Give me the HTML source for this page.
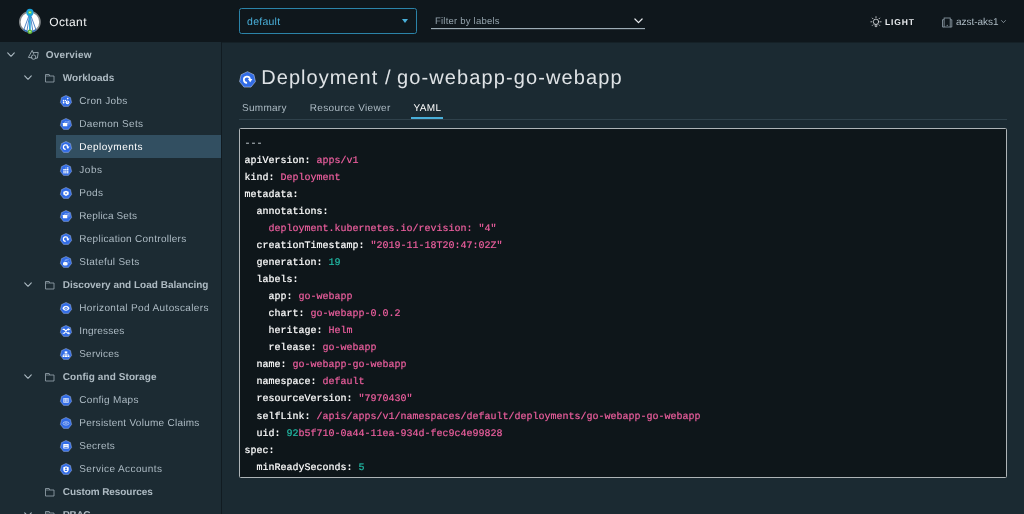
<!DOCTYPE html>
<html lang="en"><head><meta charset="utf-8"><title>Octant</title>
<style>
html,body{margin:0;padding:0}
body{width:1024px;height:514px;overflow:hidden;background:#1b2a32;font-family:"Liberation Sans",sans-serif;color:#adbbc4;position:relative;-webkit-font-smoothing:antialiased;text-rendering:geometricPrecision}
.hdr,.side,.main{will-change:transform}
.main{position:absolute;left:0;top:0;width:1024px;height:514px}
.hdr{position:absolute;left:0;top:0;width:1024px;height:42px;background:#0f171c;border-bottom:1px solid #152127}
.side{position:absolute;left:0;top:42px;width:221px;height:472px;background:#1c2b33;border-right:1px solid #111b21;overflow:hidden}
.side .sel{position:absolute;left:56px;width:165px;height:23px;background:#324f61}
.ic,.ki{position:absolute;overflow:visible}
.st{position:absolute;height:23px;line-height:23px;font-size:10px;white-space:nowrap;color:#adbbc4}
.st.b{font-weight:bold;color:#aebbc3}
.st.on{color:#fff}
.abs{position:absolute;white-space:nowrap}
.brand{left:49.250px;top:10.500px;height:22px;line-height:22px;font-size:12px;color:#f2f4f5}
.ns{position:absolute;left:239px;top:8px;width:176px;height:23.600px;border:1px solid #2b83a8;border-radius:2.500px;background:#0f171c}
.ns span{position:absolute;left:7.100px;top:2.300px;line-height:23px;font-size:10.500px;color:#49afd9}
.ns i{position:absolute;left:162.400px;top:10.300px;border-left:3.600px solid transparent;border-right:3.600px solid transparent;border-top:4.200px solid #49afd9}
.flt{position:absolute;left:431px;top:10px;width:214px;height:18px;border-bottom:1px solid #9dacb5;box-shadow:0 1px 0 rgba(157,172,181,.18)}
.flt span{position:absolute;left:4px;top:1px;line-height:21px;font-size:9.500px;color:#93a2ab}
.light{left:885px;top:11px;line-height:22px;font-size:8.500px;font-weight:bold;color:#e9ecef}
.ctx{left:956px;top:11.750px;line-height:22px;font-size:10px;color:#adbbc4}
h1{position:absolute;margin:0;left:261.300px;top:63.600px;line-height:28px;font-size:20px;font-weight:normal;color:#dfe3e6;white-space:nowrap}
.tab{position:absolute;top:99.200px;line-height:20px;font-size:10px;color:#acbac3;white-space:nowrap}
.tab.on{color:#fff}
.tabline{position:absolute;left:239px;top:119px;width:768px;height:1px;background:#2f414b}
.tabsel{position:absolute;left:411px;top:116.500px;width:32px;height:2px;background:#49afd9}
pre{position:absolute;left:239px;top:128px;width:761px;height:341.250px;margin:0;padding:6.750px 0 0 4.500px;-webkit-text-stroke:.2px;border:1px solid #aeb4b7;border-radius:1.500px;background:#0e161a;font-family:"Liberation Mono",monospace;font-size:10px;line-height:17.050px;color:#fff;overflow:hidden}
pre .k{color:#fff} pre .s{color:#ee5f9f} pre .n{color:#22bba6} pre .c{color:#b4bcc0}
</style></head>
<body>
<div class="hdr">
 <svg class="ic" style="left:18px;top:8px;width:24px;height:28px" viewBox="0 0 24 28">
  <circle cx="11.900" cy="13.900" r="10.100" fill="#fff" stroke="#85898c" stroke-width="1.600"/>
  <path d="M5.800 21.800q6.100 4.600 12.200 0" fill="none" stroke="#2a6fc0" stroke-width="1.300"/>
  <path d="M11.900 5l-6.100 16.800M11.900 5l6.100 16.800M11.900 5l-3 18.300M11.900 5l3 18.300" fill="none" stroke="#1b5fb4" stroke-width=".75"/>
  <path d="M11.900 5v18" stroke="#19a3dc" stroke-width="1.600"/>
  <circle cx="11.900" cy="4.400" r="3.600" fill="#19a3dc"/><circle cx="11.900" cy="4.400" r="1.700" fill="#6fcf4a"/><circle cx="11.900" cy="4.400" r=".7" fill="#dff5d2"/>
  <circle cx="11.900" cy="23.750" r="2.300" fill="#62bb3a"/><circle cx="11.900" cy="23.750" r=".8" fill="#dff5d2"/>
 </svg>
 <div class="abs brand" style="letter-spacing:0.378px">Octant</div>
 <div class="ns"><span class="t" style="letter-spacing:0.245px">default</span><i></i></div>
 <div class="flt"><span class="t" style="letter-spacing:0.217px">Filter by labels</span>
  <svg class="ic" style="left:203px;top:8.300px;width:9px;height:5.800px" viewBox="0 0 9 5.800"><path d="M.9 1l3.600 3.700 3.600-3.700" fill="none" stroke="#e9ecef" stroke-width="1.200" stroke-linecap="round" stroke-linejoin="round"/></svg></div>
 <svg class="ic" style="left:870px;top:15.500px;width:12px;height:12px" viewBox="0 0 12 12"><g fill="none" stroke="#dfe3e6" stroke-width=".8" stroke-linecap="round"><circle cx="6" cy="5.800" r="2.700"/><path d="M6 .7v.9M.9 5.800h.9M10.200 5.800h.9M2.300 2.100l.7 .7M9.700 2.100l-.7 .7M2.300 9.500l.7-.7M9.700 9.500l-.7-.7"/><path d="M5.200 8.700v1.900h1.600v-1.900" stroke-width=".75"/></g></svg>
 <div class="abs light" style="letter-spacing:0.875px">LIGHT</div>
 <svg class="ic" style="left:942px;top:16.500px;width:11px;height:11px" viewBox="0 0 11 11"><g fill="none" stroke="#8c9ba5" stroke-width=".85"><rect x="2.100" y="1" width="6.100" height="9"/><path d="M2.100 2.700h-1.600v7.300h1.600M8.200 2.700h1.600v7.300h-1.600"/></g><circle cx="5.200" cy="8.400" r=".55" fill="#8c9ba5"/></svg>
 <div class="abs ctx" style="letter-spacing:-0.037px">azst-aks1</div>
 <svg class="ic" style="left:1000.700px;top:20.300px;width:5px;height:3.400px" viewBox="0 0 6 4"><path d="M.6 .6l2.400 2.500 2.400-2.500" fill="none" stroke="#adbbc4" stroke-width=".8" stroke-linecap="round" stroke-linejoin="round"/></svg>
</div>
<div class="side">
<svg class="ic" style="left:7.0px;top:10.1px;width:8px;height:5.400px" viewBox="0 0 8 5.400"><path d="M.7 .9l3.300 3.400 3.300-3.400" fill="none" stroke="#adbbc4" stroke-width="1.100" stroke-linecap="round" stroke-linejoin="round"/></svg>
<svg class="ic" style="left:28px;top:7.5px;width:11px;height:10px" viewBox="0 0 11 10"><g fill="none" stroke="#adbbc4" stroke-width=".8" stroke-linejoin="round"><path d="M4.200 .4l1.400 3.400M4.200 .4l-3.800 7 4 .5"/><path d="M5 2.700l5.200-.3-.8 5.700-2.200 .3"/><circle cx="5.600" cy="7.100" r="2.200"/></g></svg>
<div class="st b" style="left:45.75px;top:1.8px;letter-spacing:0.181px">Overview</div>
<svg class="ic" style="left:24.2px;top:33.1px;width:8px;height:5.400px" viewBox="0 0 8 5.400"><path d="M.7 .9l3.300 3.400 3.300-3.400" fill="none" stroke="#adbbc4" stroke-width="1.100" stroke-linecap="round" stroke-linejoin="round"/></svg>
<svg class="ic" style="left:44.7px;top:32.0px;width:9.500px;height:8.500px" viewBox="0 0 9.500 8.500"><path d="M.5 8v-7.500h3.700l.5 1.500h4.300v6z" fill="none" stroke="#93a2ab" stroke-width=".85" stroke-linejoin="round"/><path d="M.5 2h4.200" stroke="#93a2ab" stroke-width=".7"/></svg>
<div class="st b" style="left:62.75px;top:24.8px;letter-spacing:0.07px">Workloads</div>
<svg class="ki" style="left:60.2px;top:52.949999999999996px;width:12px;height:12px" viewBox="0 0 12 12"><polygon points="6.00,0.45 10.50,2.61 11.61,7.48 8.49,11.38 3.51,11.38 0.39,7.48 1.50,2.61" fill="#326ce5" stroke="#dfe8fb" stroke-opacity=".75" stroke-width=".45" stroke-linejoin="round"/><g fill="#fff"><circle cx="3.600" cy="5.700" r=".85"/><circle cx="3.600" cy="7.700" r=".85"/><circle cx="5.500" cy="5.500" r=".65"/><circle cx="7.700" cy="3.600" r=".8"/><circle cx="7.500" cy="7.300" r="1.850"/><path d="M7.500 6.200v1.200h.9" stroke="#326ce5" stroke-width=".55" fill="none"/></g></svg>
<div class="st" style="left:79.25px;top:47.8px;letter-spacing:0.303px">Cron Jobs</div>
<svg class="ki" style="left:60.2px;top:75.95px;width:12px;height:12px" viewBox="0 0 12 12"><polygon points="6.00,0.45 10.50,2.61 11.61,7.48 8.49,11.38 3.51,11.38 0.39,7.48 1.50,2.61" fill="#326ce5" stroke="#dfe8fb" stroke-opacity=".75" stroke-width=".45" stroke-linejoin="round"/><g fill="#fff"><rect x="2.900" y="5.100" width="4.400" height="3.100" rx=".2"/><path d="M4.200 4.300h4.100v2.900M5.400 3.500h4v2.900" fill="none" stroke="#fff" stroke-width=".55" stroke-dasharray=".8 .5" opacity=".8"/></g></svg>
<div class="st" style="left:79.25px;top:70.8px;letter-spacing:0.316px">Daemon Sets</div>
<div class="sel" style="top:93px"></div>
<svg class="ki" style="left:60.2px;top:98.95px;width:12px;height:12px" viewBox="0 0 12 12"><polygon points="6.00,0.45 10.50,2.61 11.61,7.48 8.49,11.38 3.51,11.38 0.39,7.48 1.50,2.61" fill="#326ce5" stroke="#dfe8fb" stroke-opacity=".75" stroke-width=".45" stroke-linejoin="round"/><g fill="#fff"><path d="M5.700 8.350a2.200 2.200 0 1 1 2.100-2.500" fill="none" stroke="#fff" stroke-width="1.200"/><path d="M6.300 5.600h3.200l-1.600 2.300z"/></g></svg>
<div class="st on" style="left:79.25px;top:93.8px;letter-spacing:0.489px">Deployments</div>
<svg class="ki" style="left:60.2px;top:121.95px;width:12px;height:12px" viewBox="0 0 12 12"><polygon points="6.00,0.45 10.50,2.61 11.61,7.48 8.49,11.38 3.51,11.38 0.39,7.48 1.50,2.61" fill="#326ce5" stroke="#dfe8fb" stroke-opacity=".75" stroke-width=".45" stroke-linejoin="round"/><g fill="#fff"><g><rect x="3.300" y="5" width="1.450" height="1.200"/><rect x="5.150" y="5" width="1.450" height="1.200"/><rect x="7" y="5" width="1.450" height="1.200"/><rect x="3.300" y="6.600" width="1.450" height="1.200"/><rect x="5.150" y="6.600" width="1.450" height="1.200"/><rect x="7" y="6.600" width="1.450" height="1.200"/><rect x="3.300" y="8.200" width="1.450" height="1.200"/><rect x="5.150" y="8.200" width="1.450" height="1.200"/><rect x="7" y="8.200" width="1.450" height="1.200"/><rect x="7" y="3.400" width="1.450" height="1.200"/><rect x="5.150" y="3.400" width="1.450" height="1.200" opacity=".35"/></g></g></svg>
<div class="st" style="left:79.25px;top:116.8px;letter-spacing:0.542px">Jobs</div>
<svg class="ki" style="left:60.2px;top:144.95000000000002px;width:12px;height:12px" viewBox="0 0 12 12"><polygon points="6.00,0.45 10.50,2.61 11.61,7.48 8.49,11.38 3.51,11.38 0.39,7.48 1.50,2.61" fill="#326ce5" stroke="#dfe8fb" stroke-opacity=".75" stroke-width=".45" stroke-linejoin="round"/><g fill="#fff"><path d="M6 3.700l2.700 1v2.900l-2.700 1.400-2.700-1.400v-2.900z"/><circle cx="6" cy="6.300" r="1" fill="#326ce5" opacity=".75"/></g></svg>
<div class="st" style="left:79.25px;top:139.8px;letter-spacing:0.318px">Pods</div>
<svg class="ki" style="left:60.2px;top:167.95000000000002px;width:12px;height:12px" viewBox="0 0 12 12"><polygon points="6.00,0.45 10.50,2.61 11.61,7.48 8.49,11.38 3.51,11.38 0.39,7.48 1.50,2.61" fill="#326ce5" stroke="#dfe8fb" stroke-opacity=".75" stroke-width=".45" stroke-linejoin="round"/><g fill="#fff"><rect x="2.900" y="5.100" width="4.400" height="3.100" rx=".2"/><path d="M4.200 4.300h4.100v2.900M5.400 3.500h4v2.900" fill="none" stroke="#fff" stroke-width=".55" stroke-dasharray=".8 .5" opacity=".8"/></g></svg>
<div class="st" style="left:79.25px;top:162.8px;letter-spacing:0.146px">Replica Sets</div>
<svg class="ki" style="left:60.2px;top:190.95000000000002px;width:12px;height:12px" viewBox="0 0 12 12"><polygon points="6.00,0.45 10.50,2.61 11.61,7.48 8.49,11.38 3.51,11.38 0.39,7.48 1.50,2.61" fill="#326ce5" stroke="#dfe8fb" stroke-opacity=".75" stroke-width=".45" stroke-linejoin="round"/><g fill="#fff"><path d="M5.700 8.350a2.200 2.200 0 1 1 2.100-2.500" fill="none" stroke="#fff" stroke-width="1.200"/><path d="M6.300 5.600h3.200l-1.600 2.300z"/></g></svg>
<div class="st" style="left:79.25px;top:185.8px;letter-spacing:0.29px">Replication Controllers</div>
<svg class="ki" style="left:60.2px;top:213.95000000000002px;width:12px;height:12px" viewBox="0 0 12 12"><polygon points="6.00,0.45 10.50,2.61 11.61,7.48 8.49,11.38 3.51,11.38 0.39,7.48 1.50,2.61" fill="#326ce5" stroke="#dfe8fb" stroke-opacity=".75" stroke-width=".45" stroke-linejoin="round"/><g fill="#fff"><path d="M3 8.600v-1.600c0-.7 1-1.100 2.300-1.100s2.300 .4 2.300 1.100v1.600c0 .6-1 1-2.300 1s-2.300-.4-2.300-1z" opacity=".95"/><path d="M4 5.300l4.600-1.600M5 4.100l3.400-1.100M8 5l1.200 1.600M7.900 6.300l.8 1.300" stroke="#fff" stroke-width=".55" stroke-dasharray=".8 .5" opacity=".8" fill="none"/></g></svg>
<div class="st" style="left:79.25px;top:208.8px;letter-spacing:0.275px">Stateful Sets</div>
<svg class="ic" style="left:24.2px;top:240.1px;width:8px;height:5.400px" viewBox="0 0 8 5.400"><path d="M.7 .9l3.300 3.400 3.300-3.400" fill="none" stroke="#adbbc4" stroke-width="1.100" stroke-linecap="round" stroke-linejoin="round"/></svg>
<svg class="ic" style="left:44.7px;top:239.0px;width:9.500px;height:8.500px" viewBox="0 0 9.500 8.500"><path d="M.5 8v-7.500h3.700l.5 1.500h4.300v6z" fill="none" stroke="#93a2ab" stroke-width=".85" stroke-linejoin="round"/><path d="M.5 2h4.200" stroke="#93a2ab" stroke-width=".7"/></svg>
<div class="st b" style="left:62.75px;top:231.8px;letter-spacing:0.005px">Discovery and Load Balancing</div>
<svg class="ki" style="left:60.2px;top:259.95px;width:12px;height:12px" viewBox="0 0 12 12"><polygon points="6.00,0.45 10.50,2.61 11.61,7.48 8.49,11.38 3.51,11.38 0.39,7.48 1.50,2.61" fill="#326ce5" stroke="#dfe8fb" stroke-opacity=".75" stroke-width=".45" stroke-linejoin="round"/><g fill="#fff"><path d="M2.400 6.300c1.100-1.800 2.300-2.500 3.600-2.500s2.500 .7 3.600 2.500c-1.100 1.800-2.300 2.500-3.600 2.500s-2.500-.7-3.600-2.500z"/><circle cx="6" cy="6.300" r="1.500" fill="#326ce5"/><circle cx="6" cy="6.300" r=".7"/></g></svg>
<div class="st" style="left:79.25px;top:254.8px;letter-spacing:0.367px">Horizontal Pod Autoscalers</div>
<svg class="ki" style="left:60.2px;top:282.95px;width:12px;height:12px" viewBox="0 0 12 12"><polygon points="6.00,0.45 10.50,2.61 11.61,7.48 8.49,11.38 3.51,11.38 0.39,7.48 1.50,2.61" fill="#326ce5" stroke="#dfe8fb" stroke-opacity=".75" stroke-width=".45" stroke-linejoin="round"/><g fill="#fff"><path d="M2.600 4.400h1.700l3.200 3.800h1.500M2.600 8.200h1.700l3.200-3.800h1.500" fill="none" stroke="#fff" stroke-width="1.150"/><path d="M8.300 3l1.900 1.400-1.900 1.400zM8.300 6.800l1.900 1.400-1.900 1.400z"/></g></svg>
<div class="st" style="left:79.25px;top:277.8px;letter-spacing:0.205px">Ingresses</div>
<svg class="ki" style="left:60.2px;top:305.95px;width:12px;height:12px" viewBox="0 0 12 12"><polygon points="6.00,0.45 10.50,2.61 11.61,7.48 8.49,11.38 3.51,11.38 0.39,7.48 1.50,2.61" fill="#326ce5" stroke="#dfe8fb" stroke-opacity=".75" stroke-width=".45" stroke-linejoin="round"/><g fill="#fff"><rect x="4.700" y="3.400" width="2.600" height="1.900"/><rect x="2.600" y="7.300" width="2" height="1.700"/><rect x="5" y="7.300" width="2" height="1.700"/><rect x="7.400" y="7.300" width="2" height="1.700"/><path d="M6 5.300v2M3.600 7.300v-1h4.800v1" fill="none" stroke="#fff" stroke-width=".6"/></g></svg>
<div class="st" style="left:79.25px;top:300.8px;letter-spacing:0.199px">Services</div>
<svg class="ic" style="left:24.2px;top:332.1px;width:8px;height:5.400px" viewBox="0 0 8 5.400"><path d="M.7 .9l3.300 3.400 3.300-3.400" fill="none" stroke="#adbbc4" stroke-width="1.100" stroke-linecap="round" stroke-linejoin="round"/></svg>
<svg class="ic" style="left:44.7px;top:331.0px;width:9.500px;height:8.500px" viewBox="0 0 9.500 8.500"><path d="M.5 8v-7.500h3.700l.5 1.500h4.300v6z" fill="none" stroke="#93a2ab" stroke-width=".85" stroke-linejoin="round"/><path d="M.5 2h4.200" stroke="#93a2ab" stroke-width=".7"/></svg>
<div class="st b" style="left:62.75px;top:323.8px;letter-spacing:0.089px">Config and Storage</div>
<svg class="ki" style="left:60.2px;top:351.95px;width:12px;height:12px" viewBox="0 0 12 12"><polygon points="6.00,0.45 10.50,2.61 11.61,7.48 8.49,11.38 3.51,11.38 0.39,7.48 1.50,2.61" fill="#326ce5" stroke="#dfe8fb" stroke-opacity=".75" stroke-width=".45" stroke-linejoin="round"/><g fill="#fff"><rect x="3.300" y="3.900" width="5.400" height="4.800" rx=".3" opacity=".8"/><path d="M4.200 5.100h1.200M4.200 6.300h1.200M4.200 7.500h1.200M6.300 5.100h1.600M6.300 6.300h1.600M6.300 7.500h1.600" stroke="#326ce5" stroke-width=".6"/></g></svg>
<div class="st" style="left:79.25px;top:346.8px;letter-spacing:0.306px">Config Maps</div>
<svg class="ki" style="left:60.2px;top:374.95px;width:12px;height:12px" viewBox="0 0 12 12"><polygon points="6.00,0.45 10.50,2.61 11.61,7.48 8.49,11.38 3.51,11.38 0.39,7.48 1.50,2.61" fill="#326ce5" stroke="#dfe8fb" stroke-opacity=".75" stroke-width=".45" stroke-linejoin="round"/><g fill="#fff"><ellipse cx="6" cy="6.400" rx="3" ry="1.700" fill="none" stroke="#fff" stroke-width=".6" opacity=".85"/><ellipse cx="6" cy="6.100" rx="1.700" ry=".7" fill="#fff" opacity=".55"/></g></svg>
<div class="st" style="left:79.25px;top:369.8px;letter-spacing:0.268px">Persistent Volume Claims</div>
<svg class="ki" style="left:60.2px;top:397.95px;width:12px;height:12px" viewBox="0 0 12 12"><polygon points="6.00,0.45 10.50,2.61 11.61,7.48 8.49,11.38 3.51,11.38 0.39,7.48 1.50,2.61" fill="#326ce5" stroke="#dfe8fb" stroke-opacity=".75" stroke-width=".45" stroke-linejoin="round"/><g fill="#fff"><rect x="3.300" y="4" width="5.400" height="4.600" rx=".4"/><rect x="4.300" y="4.900" width="3.400" height=".8" fill="#326ce5" opacity=".55"/><rect x="4.300" y="6.900" width="3.400" height="1" fill="#326ce5" opacity=".8"/></g></svg>
<div class="st" style="left:79.25px;top:392.8px;letter-spacing:0.282px">Secrets</div>
<svg class="ki" style="left:60.2px;top:420.95px;width:12px;height:12px" viewBox="0 0 12 12"><polygon points="6.00,0.45 10.50,2.61 11.61,7.48 8.49,11.38 3.51,11.38 0.39,7.48 1.50,2.61" fill="#326ce5" stroke="#dfe8fb" stroke-opacity=".75" stroke-width=".45" stroke-linejoin="round"/><g fill="#fff"><path d="M6 3.200l2.700 1v2.500c0 1.300-1.100 2.300-2.700 2.900-1.600-.6-2.700-1.600-2.700-2.900v-2.500z"/><circle cx="6" cy="5.500" r=".9" fill="#326ce5"/><path d="M4.600 7.900c.2-.8 .7-1.200 1.400-1.200s1.200 .4 1.400 1.200z" fill="#326ce5"/></g></svg>
<div class="st" style="left:79.25px;top:415.8px;letter-spacing:0.399px">Service Accounts</div>
<svg class="ic" style="left:44.7px;top:446.0px;width:9.500px;height:8.500px" viewBox="0 0 9.500 8.500"><path d="M.5 8v-7.500h3.700l.5 1.500h4.300v6z" fill="none" stroke="#93a2ab" stroke-width=".85" stroke-linejoin="round"/><path d="M.5 2h4.200" stroke="#93a2ab" stroke-width=".7"/></svg>
<div class="st b" style="left:62.75px;top:438.8px;letter-spacing:-0.076px">Custom Resources</div>
<svg class="ic" style="left:24.2px;top:470.1px;width:8px;height:5.400px" viewBox="0 0 8 5.400"><path d="M.7 .9l3.300 3.400 3.300-3.400" fill="none" stroke="#adbbc4" stroke-width="1.100" stroke-linecap="round" stroke-linejoin="round"/></svg>
<svg class="ic" style="left:44.7px;top:469.0px;width:9.500px;height:8.500px" viewBox="0 0 9.500 8.500"><path d="M.5 8v-7.500h3.700l.5 1.500h4.300v6z" fill="none" stroke="#93a2ab" stroke-width=".85" stroke-linejoin="round"/><path d="M.5 2h4.200" stroke="#93a2ab" stroke-width=".7"/></svg>
<div class="st b" style="left:62.75px;top:461.8px;letter-spacing:-0.364px">RBAC</div>
</div>
<div class="main">
<svg class="ki" style="left:239px;top:70.5px;width:17px;height:17px" viewBox="0 0 12 12"><polygon points="6.00,0.45 10.50,2.61 11.61,7.48 8.49,11.38 3.51,11.38 0.39,7.48 1.50,2.61" fill="#326ce5" stroke="#dfe8fb" stroke-opacity=".75" stroke-width=".45" stroke-linejoin="round"/><g fill="#fff"><path d="M5.700 8.350a2.200 2.200 0 1 1 2.100-2.500" fill="none" stroke="#fff" stroke-width="1.200"/><path d="M6.300 5.600h3.200l-1.600 2.300z"/></g></svg>
<h1><span style="letter-spacing:1.02px">Deployment</span><span style="letter-spacing:.9px;margin-left:.4px"> / </span><span style="letter-spacing:1.12px;margin-left:-1.1px">go-webapp-go-webapp</span></h1>
<div class="tab" style="left:242px;letter-spacing:0.284px">Summary</div>
<div class="tab" style="left:309.750px;letter-spacing:0.324px">Resource Viewer</div>
<div class="tab on" style="left:413.500px;letter-spacing:0.333px">YAML</div>
<div class="tabline"></div><div class="tabsel"></div>
<pre><span class="c">---</span>
<span class="k">apiVersion:</span><span class="s"> apps/v1</span>
<span class="k">kind:</span><span class="s"> Deployment</span>
<span class="k">metadata</span><span class="k">:</span>
<span class="k">  annotations:</span>
<span class="s">    deployment.kubernetes.io/revision: "4"</span>
<span class="k">  creationTimestamp:</span><span class="s"> "2019-11-18T20:47:02Z"</span>
<span class="k">  generation:</span><span class="n"> 19</span>
<span class="k">  labels:</span>
<span class="k">    app:</span><span class="s"> go-webapp</span>
<span class="k">    chart:</span><span class="s"> go-webapp-0.0.2</span>
<span class="k">    heritage:</span><span class="s"> Helm</span>
<span class="k">    release:</span><span class="s"> go-webapp</span>
<span class="k">  name:</span><span class="s"> go-webapp-go-webapp</span>
<span class="k">  namespace:</span><span class="s"> default</span>
<span class="k">  resourceVersion:</span><span class="s"> "7970430"</span>
<span class="k">  selfLink:</span><span class="s"> /apis/apps/v1/namespaces/default/deployments/go-webapp-go-webapp</span>
<span class="k">  uid:</span><span class="n"> 92</span><span class="s">b5f710-0a44-11ea-934d-fec9c4e99828</span>
<span class="k">spec:</span>
<span class="k">  minReadySeconds:</span><span class="n"> 5</span></pre>
</div>
</body></html>
